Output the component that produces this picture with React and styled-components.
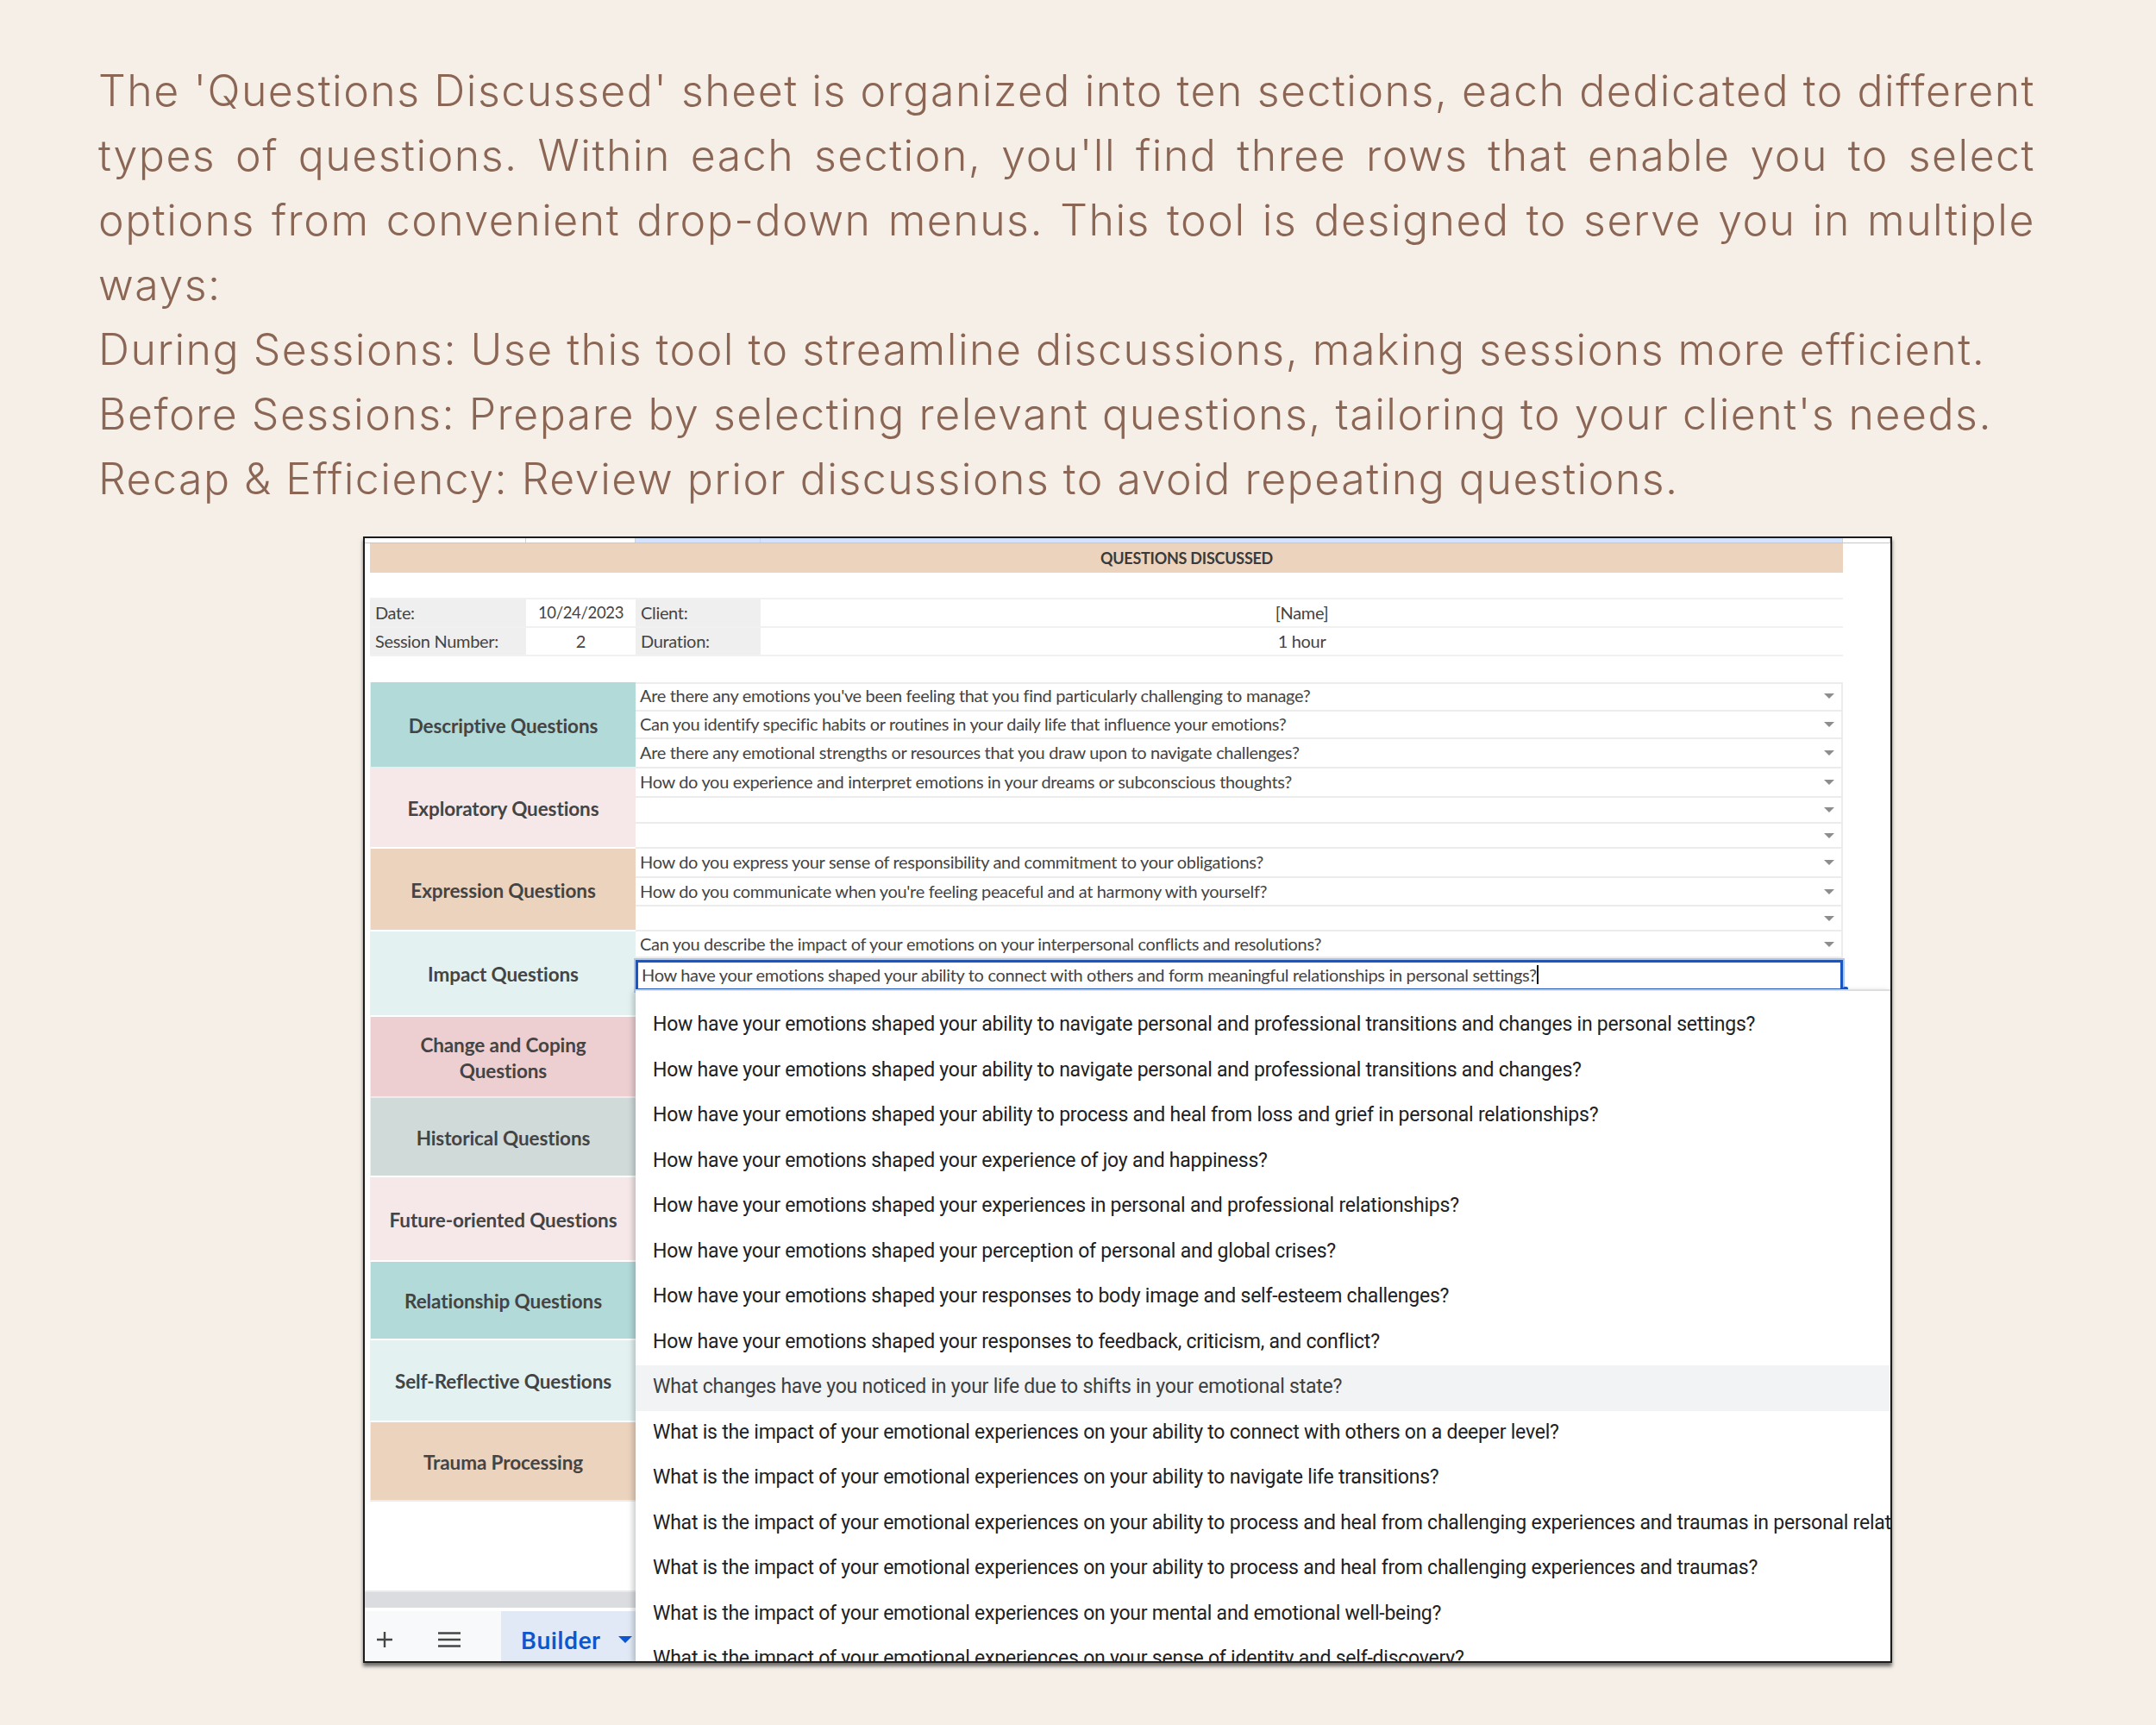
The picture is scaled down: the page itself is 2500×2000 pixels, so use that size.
import React from "react";
import styled, { createGlobalStyle } from "styled-components";

const Global = createGlobalStyle`
  html, body { margin: 0; padding: 0; background: #f5efe8; }
  * { box-sizing: border-box; }
`;

const Page = styled.div`
  width: 2500px;
  height: 2000px;
  padding: 68px 0 0 114px;
  background: #f5efe8;
  overflow: hidden;
`;

const Intro = styled.div`
  width: 2246px;
  font-family: Inter, "Open Sans", sans-serif;
  font-weight: 300;
  font-size: 50px;
  line-height: 75px;
  letter-spacing: 1.5px;
  color: #8c6654;
`;

const Line = styled.div`
  white-space: nowrap;
  ${(p) => (p.$justify ? "text-align: justify; text-align-last: justify;" : "")}
`;

const Window = styled.div`
  position: relative;
  margin: 29px 0 0 307px;
  width: 1773px;
  height: 1306px;
  border: 2px solid #1c1c1c;
  background: #fff;
  box-shadow: 0 4px 4px rgba(0, 0, 0, 0.55);
  overflow: hidden;
  display: flex;
  flex-direction: column;
  font-family: Lato, "Open Sans", sans-serif;
`;

const Sheet = styled.div`
  padding-left: 6px;
  width: 1714px;
`;

const HeaderStrip = styled.div`
  display: grid;
  grid-template-columns: 181px 127px 145px 1255px 55px;
  margin-left: -6px;
  padding-left: 6px;
  width: 1769px;
  height: 6px;
  border-bottom: 1px solid #c4c7cb;
`;

const HeaderCell = styled.div`
  background: ${(p) => (p.$selected ? "#d3e3fd" : "#fff")};
  border-right: 1px solid #cfd2d6;
`;

const Title = styled.div`
  height: 34px;
  background: #ecd3bd;
  padding-left: 186px;
  display: flex;
  align-items: center;
  justify-content: center;
  font-size: 18px;
  font-weight: 700;
  letter-spacing: -0.25px;
  color: #3a3a3a;
`;

const InfoTable = styled.div`
  margin: 29px 0 30px;
  border-top: 2px solid #f1f1f1;
`;

const InfoRow = styled.div`
  display: grid;
  grid-template-columns: 181px 127px 145px 1255px;
  height: 33px;
  border-bottom: 2px solid #f1f1f1;
`;

const InfoLabel = styled.div`
  background: #efefef;
  display: flex;
  align-items: center;
  padding: 0 0 2px 6px;
  font-size: 20px;
  letter-spacing: -0.33px;
  color: #444;
`;

const InfoValue = styled.div`
  display: flex;
  align-items: center;
  justify-content: center;
  padding-bottom: 2px;
  font-size: ${(p) => (p.$digits ? "18.5px" : "20px")};
  letter-spacing: ${(p) => (p.$digits ? "-0.35px" : "-0.33px")};
  color: #444;
`;

const Section = styled.div`
  display: grid;
  grid-template-columns: 308px 1400px;
  height: ${(p) => p.$height}px;
`;

const Category = styled.div`
  background: ${(p) => p.$color};
  display: flex;
  align-items: center;
  justify-content: center;
  text-align: center;
  padding: 3px 4px 0;
  font-size: 22.5px;
  line-height: 30px;
  font-weight: 700;
  letter-spacing: -0.1px;
  color: #444;
  border-left: 1px solid #eeeeee;
  border-bottom: 2px solid ${(p) => (p.$rule ? "#ececec" : "transparent")};
  background-clip: padding-box;
`;

const Rows = styled.div`
  display: flex;
  flex-direction: column;
`;

const Row = styled.div`
  height: ${(p) => p.$height}px;
  display: flex;
  align-items: center;
  justify-content: space-between;
  padding: 0 8px ${(p) => (p.$first ? "2px" : "0")} 5px;
  border-bottom: 2px solid #ececec;
  border-right: 2px solid #ececec;
  border-top: ${(p) => (p.$first ? "2px solid #ececec" : "0")};
  font-size: 20px;
  letter-spacing: -0.33px;
  color: #444;
`;

const RowText = styled.span`
  margin-top: -2px;
`;

const Chevron = styled.span`
  width: 0;
  height: 0;
  border-left: 6px solid transparent;
  border-right: 6px solid transparent;
  border-top: 6px solid #8d8d8d;
`;

const ActiveCell = styled.div`
  position: relative;
  height: 36px;
  margin-top: 2px;
  display: flex;
  align-items: center;
  padding: 0 0 3px 4px;
  border: 3px solid #1a56c0;
  outline: 2px solid #a9c6f7;
  font-size: 20px;
  letter-spacing: -0.33px;
  color: #444;
  background: #fff;
`;

const Caret = styled.span`
  display: inline-block;
  width: 2px;
  height: 22px;
  background: #111;
`;

const Handle = styled.span`
  position: absolute;
  right: -9px;
  bottom: -5px;
  width: 6px;
  height: 7px;
  background: #1a56c0;
  border-radius: 2px;
`;

const Spacer = styled.div`
  flex: 1;
`;

const ScrollBand = styled.div`
  height: 24px;
  border-top: 2px solid #e8eaed;
  border-bottom: 4px solid #fff;
  background: #dadce0;
`;

const TabBar = styled.div`
  height: 58px;
  background: #f8f9fa;
  display: flex;
  align-items: center;
  color: #444746;
`;

const IconButton = styled.div`
  width: ${(p) => p.$width}px;
  padding-top: 8px;
  display: flex;
  justify-content: center;
`;

const Tab = styled.div`
  margin-left: 8px;
  width: 156px;
  height: 100%;
  background: #e1e9f7;
  display: flex;
  align-items: center;
  padding: 11px 0 0 23px;
  gap: 20px;
  font-family: Roboto, sans-serif;
  font-weight: 500;
  font-size: 28.5px;
  letter-spacing: 0.4px;
  color: #0b57d0;
`;

const TabArrow = styled.span`
  width: 0;
  height: 0;
  margin-top: -4px;
  border-left: 8px solid transparent;
  border-right: 8px solid transparent;
  border-top: 8px solid #0b57d0;
`;

const Dropdown = styled.div`
  position: absolute;
  left: 314px;
  right: 0;
  top: 523px;
  bottom: 0;
  padding-top: 14px;
  background: #fff;
  border-top: 2px solid #dedede;
  box-shadow: -3px 2px 6px rgba(60, 64, 67, 0.28);
  overflow: hidden;
  font-family: Roboto, sans-serif;
`;

const Option = styled.div`
  height: 52.5px;
  line-height: 50px;
  padding-left: 20px;
  white-space: nowrap;
  font-size: 23px;
  letter-spacing: -0.23px;
  color: ${(p) => (p.$active ? "#3c4043" : "#202124")};
  background: ${(p) => (p.$active ? "#f1f3f4" : "#fff")};
`;

const sections = [
  { name: "Descriptive Questions", color: "#b2dad9", height: 100, rule: true, rows: [
    [34, "Are there any emotions you've been feeling that you find particularly challenging to manage?"],
    [32, "Can you identify specific habits or routines in your daily life that influence your emotions?"],
    [34, "Are there any emotional strengths or resources that you draw upon to navigate challenges?"],
  ] },
  { name: "Exploratory Questions", color: "#f6e8e8", height: 93, rows: [
    [34, "How do you experience and interpret emotions in your dreams or subconscious thoughts?"],
    [30, ""],
    [29, ""],
  ] },
  { name: "Expression Questions", color: "#ecd3bd", height: 96, rows: [
    [34, "How do you express your sense of responsibility and commitment to your obligations?"],
    [33, "How do you communicate when you're feeling peaceful and at harmony with yourself?"],
    [29, ""],
  ] },
  { name: "Impact Questions", color: "#e3f2f1", height: 99, active: true, rows: [
    [31, "Can you describe the impact of your emotions on your interpersonal conflicts and resolutions?"],
  ] },
  { name: "Change and Coping Questions", color: "#edcfd1", height: 94, rule: true, wrap: true, rows: [] },
  { name: "Historical Questions", color: "#d0dad9", height: 92, rows: [] },
  { name: "Future-oriented Questions", color: "#f6e8e8", height: 98, rows: [] },
  { name: "Relationship Questions", color: "#b2dad9", height: 91, rows: [] },
  { name: "Self-Reflective Questions", color: "#e3f2f1", height: 95, rows: [] },
  { name: "Trauma Processing", color: "#ecd3bd", height: 92, rule: true, rows: [] },
];

const options = [
  "How have your emotions shaped your ability to navigate personal and professional transitions and changes in personal settings?",
  "How have your emotions shaped your ability to navigate personal and professional transitions and changes?",
  "How have your emotions shaped your ability to process and heal from loss and grief in personal relationships?",
  "How have your emotions shaped your experience of joy and happiness?",
  "How have your emotions shaped your experiences in personal and professional relationships?",
  "How have your emotions shaped your perception of personal and global crises?",
  "How have your emotions shaped your responses to body image and self-esteem challenges?",
  "How have your emotions shaped your responses to feedback, criticism, and conflict?",
  "What changes have you noticed in your life due to shifts in your emotional state?",
  "What is the impact of your emotional experiences on your ability to connect with others on a deeper level?",
  "What is the impact of your emotional experiences on your ability to navigate life transitions?",
  "What is the impact of your emotional experiences on your ability to process and heal from challenging experiences and traumas in personal relationships?",
  "What is the impact of your emotional experiences on your ability to process and heal from challenging experiences and traumas?",
  "What is the impact of your emotional experiences on your mental and emotional well-being?",
  "What is the impact of your emotional experiences on your sense of identity and self-discovery?",
];

export default function App() {
  return (
    <Page>
      <Global />
      <Intro>
        <Line $justify>The 'Questions Discussed' sheet is organized into ten sections, each dedicated to different</Line>
        <Line $justify>types of questions. Within each section, you'll find three rows that enable you to select</Line>
        <Line $justify>options from convenient drop-down menus. This tool is designed to serve you in multiple</Line>
        <Line>ways:</Line>
        <Line>During Sessions: Use this tool to streamline discussions, making sessions more efficient.</Line>
        <Line>Before Sessions: Prepare by selecting relevant questions, tailoring to your client's needs.</Line>
        <Line>Recap &amp; Efficiency: Review prior discussions to avoid repeating questions.</Line>
      </Intro>
      <Window>
        <Sheet>
          <HeaderStrip>
            <HeaderCell />
            <HeaderCell />
            <HeaderCell $selected />
            <HeaderCell $selected />
            <HeaderCell />
          </HeaderStrip>
          <Title>QUESTIONS DISCUSSED</Title>
          <InfoTable>
            <InfoRow>
              <InfoLabel>Date:</InfoLabel>
              <InfoValue $digits>10/24/2023</InfoValue>
              <InfoLabel>Client:</InfoLabel>
              <InfoValue>[Name]</InfoValue>
            </InfoRow>
            <InfoRow>
              <InfoLabel>Session Number:</InfoLabel>
              <InfoValue>2</InfoValue>
              <InfoLabel>Duration:</InfoLabel>
              <InfoValue>1 hour</InfoValue>
            </InfoRow>
          </InfoTable>
          {sections.map((s, si) => (
            <Section key={s.name} $height={s.height}>
              <Category $color={s.color} $rule={s.rule}>
                {s.wrap ? <span>Change and Coping<br />Questions</span> : s.name}
              </Category>
              <Rows>
                {s.rows.map(([h, text], i) => (
                  <Row key={i} $height={h} $first={si === 0 && i === 0}>
                    <RowText>{text}</RowText>
                    <Chevron />
                  </Row>
                ))}
                {s.active && (
                  <ActiveCell>
                    How have your emotions shaped your ability to connect with others and form meaningful relationships in personal settings?
                    <Caret />
                    <Handle />
                  </ActiveCell>
                )}
              </Rows>
            </Section>
          ))}
        </Sheet>
        <Spacer />
        <ScrollBand />
        <TabBar>
          <IconButton $width={46}>
            <svg width="20" height="20" viewBox="0 0 20 20" fill="none" stroke="#444746" strokeWidth="2.4">
              <path d="M10 1v18M1 10h18" />
            </svg>
          </IconButton>
          <IconButton $width={104}>
            <svg width="28" height="20" viewBox="0 0 28 20" fill="none" stroke="#444746" strokeWidth="2.6">
              <path d="M1 2.5h26M1 10h26M1 17.5h26" />
            </svg>
          </IconButton>
          <Tab>
            Builder
            <TabArrow />
          </Tab>
        </TabBar>
        <Dropdown>
          {options.map((o, i) => (
            <Option key={o} $active={i === 8}>{o}</Option>
          ))}
        </Dropdown>
      </Window>
    </Page>
  );
}
